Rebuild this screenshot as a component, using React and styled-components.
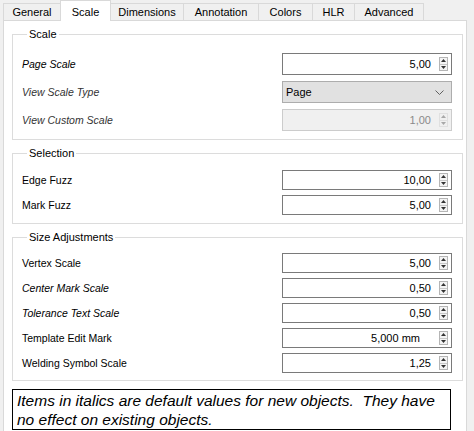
import React from 'react';
import styled, { createGlobalStyle } from 'styled-components';

const GlobalStyle = createGlobalStyle`
	html, body {
		margin: 0;
		padding: 0;
		background: #f0f0f0;
	}
	body {
		font-family: 'Liberation Sans', Arial, sans-serif;
		font-size: 10.5px;
		color: #000000;
	}
`;

const Window = styled.div`
	width: 464px;
	padding-left: 3px;
	height: 431px;
	overflow: hidden;
`;

const TabBar = styled.div`
	display: flex;
	align-items: flex-end;
	height: 21px;
	position: relative;
	z-index: 1;
	font-size: 11px;
`;

const Tab = styled.div`
	width: ${({w}) => w}px;
	height: ${({active}) => active ? 21 : 18}px;
	box-sizing: border-box;
	display: flex;
	align-items: center;
	justify-content: center;
	border: 1px solid #d9d9d9;
	border-bottom: ${({active}) => active ? 'none' : '1px solid #d9d9d9'};
	margin-left: -1px;
	background: ${({active}) => active ? '#ffffff' : '#f0f0f0'};
	padding-top: ${({active}) => active ? 1 : 0}px;
	&:first-child {
		margin-left: 0;
	}
`;

const Panel = styled.div`
	box-sizing: border-box;
	width: 464px;
	height: 420px;
	margin-top: -1px;
	background: #ffffff;
	border: 1px solid #d9d9d9;
	padding: 7px 3px 0 8px;
`;

const Group = styled.fieldset`
	margin: ${({first}) => first ? 0 : 7}px 0 0 0;
	padding: ${({pt}) => pt}px 10px ${({pb}) => pb}px 9px;
	border: 1px solid #dcdcdc;
	border-radius: 0;
	display: flex;
	flex-direction: column;
	gap: ${({gap}) => gap}px;
	min-width: 0;

	> legend {
		padding: 0 2px;
		margin-left: 5px;
		line-height: 13px;
		font-size: 11px;
	}
`;

const Row = styled.div`
	display: flex;
	align-items: center;
	justify-content: space-between;
	height: ${({h}) => h}px;
`;

const Label = styled.span`
	font-style: ${({italic}) => italic ? 'italic' : 'normal'};
	color: ${({dim}) => dim ? '#333333' : '#000000'};
`;

const SpinBox = styled.div`
	box-sizing: border-box;
	width: 170px;
	height: 100%;
	display: flex;
	align-items: center;
	border: 1px solid ${({disabled}) => disabled ? '#cccccc' : '#7a7a7a'};
	background: ${({disabled}) => disabled ? '#f0f0f0' : '#ffffff'};
	color: ${({disabled}) => disabled ? '#8a8a8a' : '#000000'};
	padding-right: 3px;
	font-size: 11px;
`;

const SpinValue = styled.div`
	flex: 1;
	text-align: right;
	padding-right: ${({unit}) => unit ? 19 : 8}px;
`;

const SpinButtons = styled.div`
	box-sizing: border-box;
	width: 9px;
	height: 14px;
	display: flex;
	flex-direction: column;
	border: 1px solid ${({disabled}) => disabled ? '#e0e0e0' : '#b5b5b5'};
	background: ${({disabled}) => disabled ? '#f0f0f0' : '#f4f4f4'};
	> div {
		flex: 1;
		display: flex;
		align-items: center;
		justify-content: center;
	}
	> div + div {
		border-top: 1px solid ${({disabled}) => disabled ? '#e0e0e0' : '#c8c8c8'};
	}
`;

const Combo = styled.div`
	box-sizing: border-box;
	width: 170px;
	height: 100%;
	display: flex;
	align-items: center;
	justify-content: space-between;
	border: 1px solid #adadad;
	background: #e1e1e1;
	padding: 0 7px 0 3px;
	font-size: 11px;
`;

const Note = styled.div`
	box-sizing: border-box;
	width: 439px;
	height: 41px;
	margin-top: 8px;
	border: 1px solid #000000;
	background: #ffffff;
	padding: 1px 0 0 4px;
	font-style: italic;
	font-size: 15.5px;
	line-height: 19px;
	color: #000000;
	white-space: pre-wrap;
`;

const Arrows = ({disabled}) => {
	const c = disabled ? '#a8a8a8' : '#333333';
	return (
		<SpinButtons disabled={disabled}>
			<div>
				<svg width="5" height="3" viewBox="0 0 5 3"><path d="M2.5 0 L5 3 L0 3 Z" fill={c} /></svg>
			</div>
			<div>
				<svg width="5" height="3" viewBox="0 0 5 3"><path d="M0 0 L5 0 L2.5 3 Z" fill={c} /></svg>
			</div>
		</SpinButtons>
	);
};

const Spin = ({value, disabled, unit}) => (
	<SpinBox disabled={disabled}>
		<SpinValue unit={unit}>{value}</SpinValue>
		<Arrows disabled={disabled} />
	</SpinBox>
);

const tabs = [
	['General', 58],
	['Scale', 51],
	['Dimensions', 74],
	['Annotation', 76],
	['Colors', 55],
	['HLR', 43],
	['Advanced', 70],
];

const sizeRows = [
	['Vertex Scale', '5,00', false],
	['Center Mark Scale', '0,50', true],
	['Tolerance Text Scale', '0,50', true],
	['Template Edit Mark', '5,000 mm', false, true],
	['Welding Symbol Scale', '1,25', false],
];

const App = () => (
	<>
		<GlobalStyle />
		<Window>
			<TabBar>
				{tabs.map(([name, w]) => (
					<Tab key={name} w={w} active={name === 'Scale'}>{name}</Tab>
				))}
			</TabBar>
			<Panel>
				<Group first pt={12} pb={8} gap={6}>
					<legend>Scale</legend>
					<Row h={22}>
						<Label italic>Page Scale</Label>
						<Spin value={'5,00'} />
					</Row>
					<Row h={22}>
						<Label italic dim>View Scale Type</Label>
						<Combo>
							<span>Page</span>
							<svg width="9" height="5" viewBox="0 0 9 5">
								<path d="M0.5 0.5 L4.5 4.5 L8.5 0.5" fill="none" stroke="#606060" strokeWidth="1" />
							</svg>
						</Combo>
					</Row>
					<Row h={22}>
						<Label italic dim>View Custom Scale</Label>
						<Spin value={'1,00'} disabled />
					</Row>
				</Group>
				<Group pt={10} pb={8} gap={5}>
					<legend>Selection</legend>
					<Row h={20}>
						<Label>Edge Fuzz</Label>
						<Spin value={'10,00'} />
					</Row>
					<Row h={20}>
						<Label>Mark Fuzz</Label>
						<Spin value={'5,00'} />
					</Row>
				</Group>
				<Group pt={9} pb={7} gap={5}>
					<legend>Size Adjustments</legend>
					{sizeRows.map(([label, value, italic, unit]) => (
						<Row h={20} key={label}>
							<Label italic={italic}>{label}</Label>
							<Spin value={value} unit={unit} />
						</Row>
					))}
				</Group>
				<Note>{'Items in italics are default values for new objects.  They have\nno effect on existing objects.'}</Note>
			</Panel>
		</Window>
	</>
);

export default App;
